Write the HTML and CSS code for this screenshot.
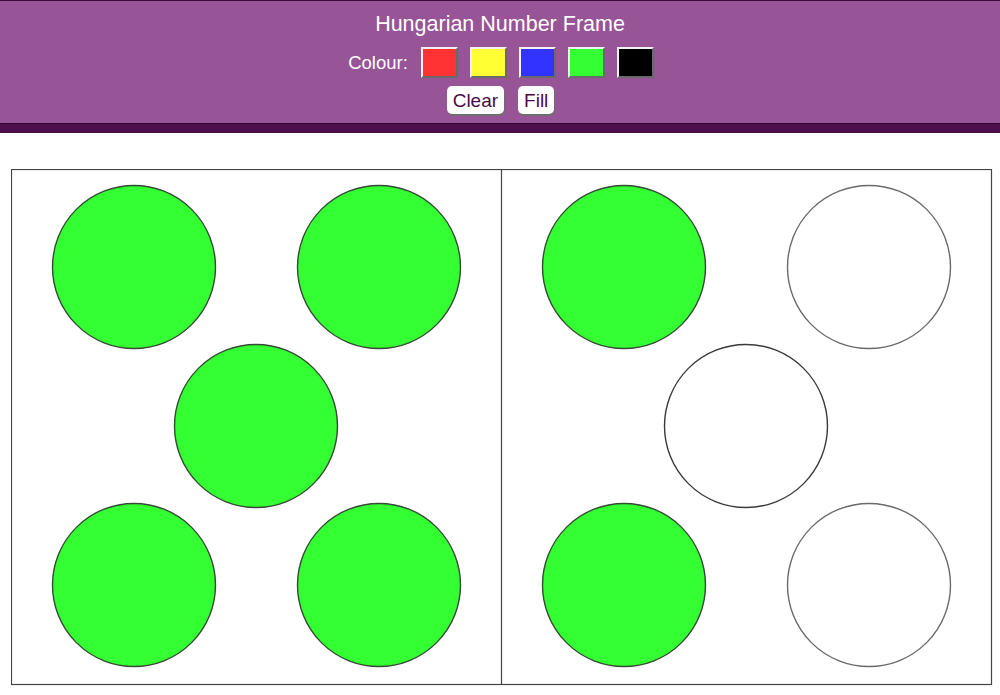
FILE: index.html
```html
<!DOCTYPE html>
<html>
<head>
<meta charset="utf-8">
<title>Hungarian Number Frame</title>
<link rel="stylesheet" href="styles.css">
</head>
<body>
<header class="header">
  <h1 class="title">Hungarian Number Frame</h1>
  <div class="colour-row">
    <span class="colour-label">Colour:</span>
    <span class="swatch red"></span>
    <span class="swatch yellow"></span>
    <span class="swatch blue"></span>
    <span class="swatch green"></span>
    <span class="swatch black"></span>
  </div>
  <div class="button-row">
    <button class="btn">Clear</button>
    <button class="btn">Fill</button>
  </div>
</header>
<main class="main">
  <svg class="frame" width="982" height="517" viewBox="0 0 982 517">
    <rect x="0.5" y="0.5" width="980" height="515" fill="#fff" stroke="#444" stroke-width="1.2"/>
    <line x1="490.5" y1="0.5" x2="490.5" y2="515.5" stroke="#444" stroke-width="1.2"/>
    <g class="on">
      <circle cx="123" cy="98" r="81.5"/>
      <circle cx="368" cy="98" r="81.5"/>
      <circle cx="245" cy="257" r="81.5"/>
      <circle cx="123" cy="416" r="81.5"/>
      <circle cx="368" cy="416" r="81.5"/>
      <circle cx="613" cy="98" r="81.5"/>
      <circle cx="613" cy="416" r="81.5"/>
    </g>
    <g class="off">
      <circle cx="858" cy="98" r="81.5"/>
      <circle class="dark" cx="735" cy="257" r="81.5"/>
      <circle cx="858" cy="416" r="81.5"/>
    </g>
  </svg>
</main>
</body>
</html>
```
FILE: styles.css
```css
html, body {
  margin: 0;
  padding: 0;
  background: #fff;
  font-family: "Liberation Sans", Arial, sans-serif;
}
.header {
  background: #975496;
  border-top: 1px solid #3c0a3a;
  border-bottom: 9px solid #4d0f4b;
  box-shadow: inset 0 -1px 0 #2e052c;
  padding: 11px 0 10px;
  text-align: center;
  color: #fff;
}
.title {
  margin: 0;
  font-size: 21.5px;
  font-weight: normal;
  line-height: 24px;
}
.colour-row {
  margin-top: 11px;
  display: flex;
  justify-content: center;
  align-items: center;
  gap: 12px;
  height: 31px;
  padding-left: 2px;
}
.colour-label {
  font-size: 18.5px;
  margin-right: 1px;
}
.swatch {
  display: block;
  width: 33px;
  height: 27px;
  border-style: solid;
  border-width: 2px;
  border-color: #f4f0f4 #6a6a6a #6a6a6a #f4f0f4;
}
.red { background: #ff3333; }
.yellow { background: #ffff33; }
.blue { background: #3333ff; }
.green { background: #33ff33; }
.black { background: #000; }
.button-row {
  margin-top: 8px;
  display: flex;
  justify-content: center;
  gap: 14px;
  padding-left: 1px;
}
.btn {
  font-family: "Liberation Sans", Arial, sans-serif;
  font-size: 19px;
  color: #4a0a48;
  background: #fff;
  border: none;
  border-radius: 5px;
  box-shadow: 1px 2px 0 #6e6e6e;
  height: 28px;
  padding: 2px 6px 0;
  line-height: 26px;
}
.main {
  padding: 36px 0 0 11px;
}
.frame {
  display: block;
}
.on circle {
  fill: #33ff33;
  stroke: #344a34;
  stroke-width: 1.4;
}
.off circle {
  fill: #fff;
  stroke: #6a6a6a;
  stroke-width: 1.4;
}
.off circle.dark {
  stroke: #3a3a3a;
}
```
